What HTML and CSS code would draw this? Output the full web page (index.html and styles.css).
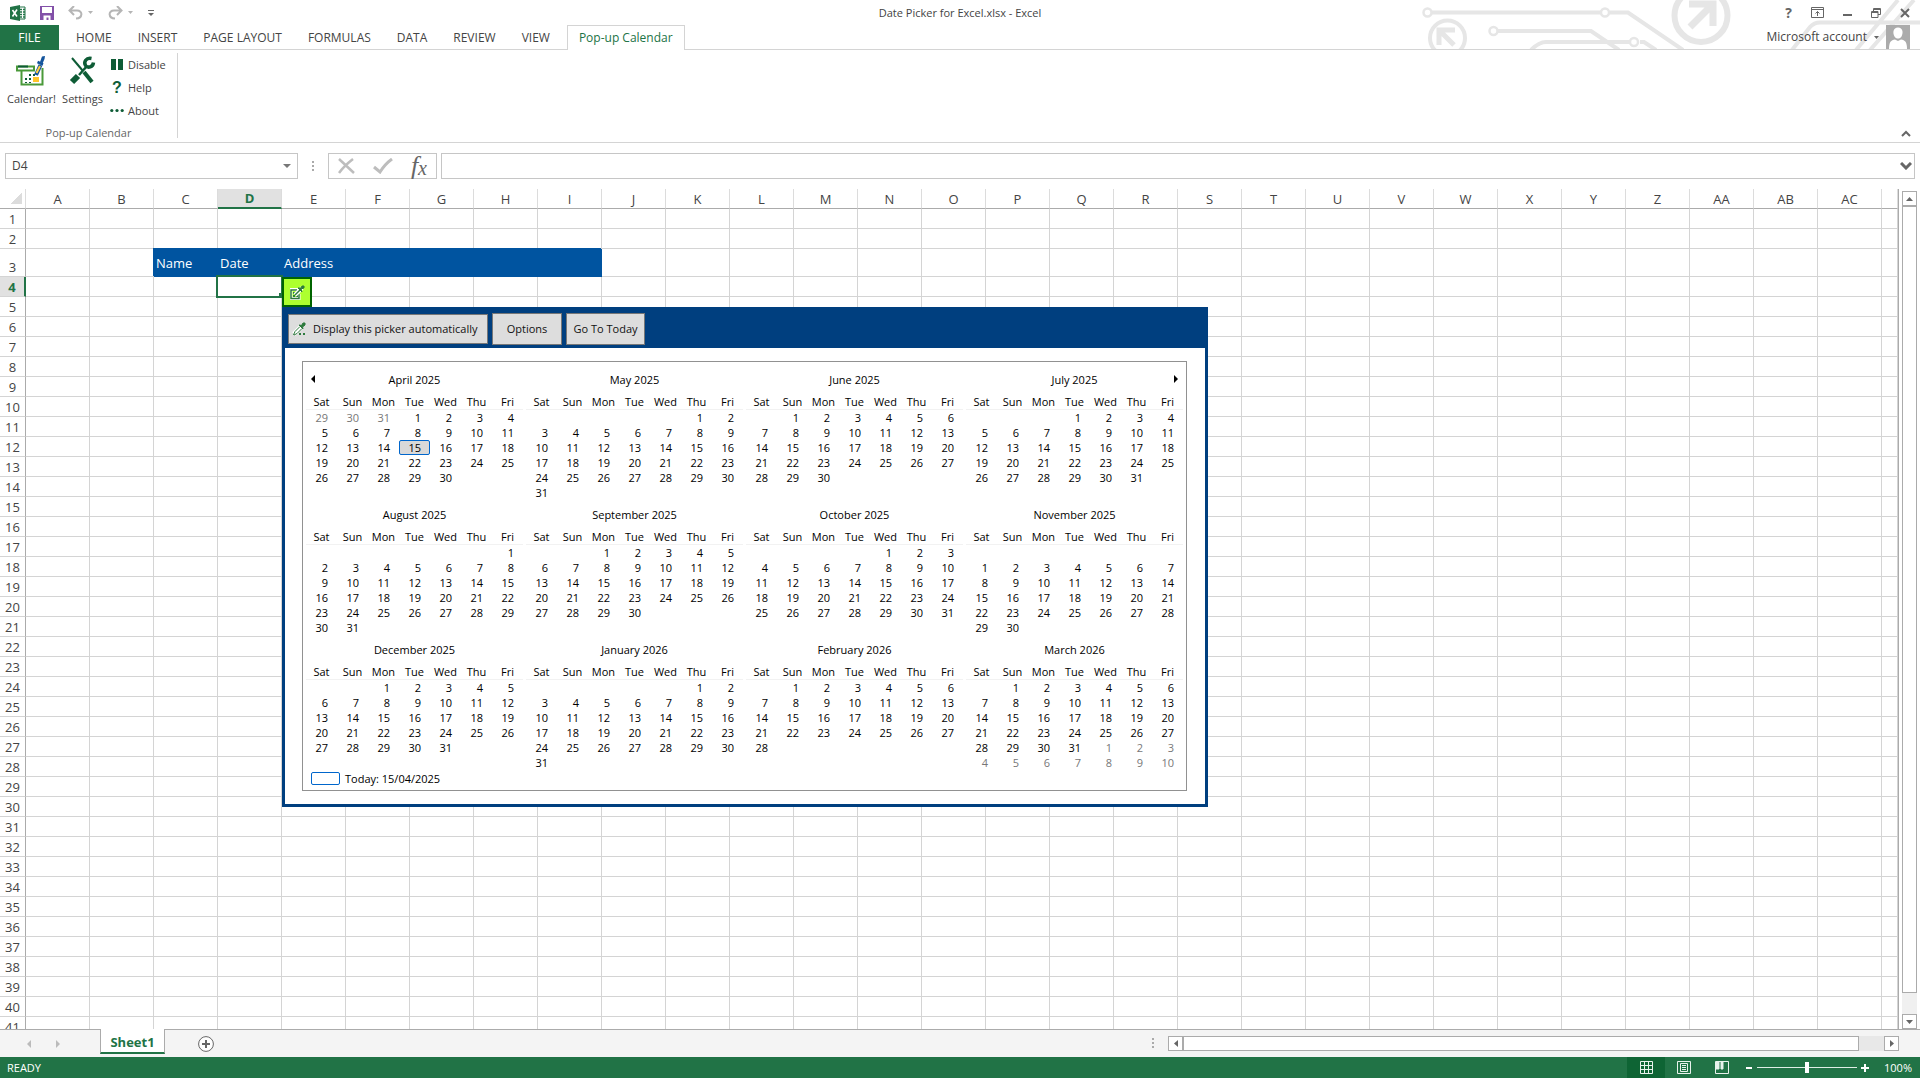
FILE: index.html
```html
<!DOCTYPE html>
<html lang="en">
<head>
<meta charset="utf-8">
<title>Date Picker for Excel.xlsx - Excel</title>
<link rel="stylesheet" href="styles.css">
</head>
<body>
<div class="app">
  <header class="top">
    <svg class="circuit" width="520" height="49" viewBox="0 0 520 49" fill="none" stroke="#e6e6e6" stroke-width="4" aria-hidden="true">
      <path d="M32 12.500H201M210 12.500H228L283 50M98 31H191L219 50M131 50Q139 42 146 42H229M240 42H244L256 50M392 50L410 27Q414 22.500 420 22.500H520M456 50L498 0M470 50L514 0"/>
      <g stroke-width="2.500"><circle cx="27.500" cy="12.500" r="4"/><circle cx="205" cy="12.500" r="4"/><circle cx="93.500" cy="31" r="4"/><circle cx="234" cy="42" r="4"/></g>
      <circle cx="47.500" cy="38" r="17.500"/>
      <path d="M39 45V30H55M40 31L54 45" stroke-width="5"/>
      <circle cx="301" cy="15.500" r="26.500" stroke-width="6"/>
      <path d="M289 4H313V26M312 5L290 27" stroke-width="7"/>
    </svg>
    <div class="titlebar">
      <div class="quick">
        <svg class="logo" width="16" height="16" viewBox="0 0 16 16" aria-hidden="true"><path d="M9 2H15V14H9" fill="#fff" stroke="#217346"/><path d="M10 4.500h2M13 4.500h2M10 7h2M13 7h2M10 9.500h2M13 9.500h2M10 12h2M13 12h2" stroke="#217346" stroke-width="1.500"/><path d="M0 2L10 0V16L0 14Z" fill="#217346"/><path d="M2.500 5L7 11.500M7 4.500L2.500 11.500" stroke="#fff" stroke-width="1.600"/></svg>
        <button class="plain" aria-label="Save"><svg width="14" height="14" viewBox="0 0 14 14"><path d="M0 0H14V14H0Z" fill="#8250a8"/><path d="M2 1H12V7H2ZM3.500 9.500H10.500V14H8.500V11.500H6.500V14H3.500Z" fill="#fff"/></svg></button>
        <button class="plain undo" aria-label="Undo"><svg width="26" height="14" viewBox="0 0 26 14" fill="none" stroke="#b5b5b5" stroke-width="2"><path d="M6 0L1.500 4.500L6 9M2 4.500H9C15 4.500 15 12 8 12.500"/><path d="M20 5H25L22.500 8Z" fill="#b5b5b5" stroke="none"/></svg></button>
        <button class="plain" aria-label="Redo"><svg width="26" height="14" viewBox="0 0 26 14" fill="none" stroke="#b5b5b5" stroke-width="2"><path d="M9 0L13.500 4.500L9 9M13 4.500H6C0 4.500 0 12 7 12.500"/><path d="M20 5H25L22.500 8Z" fill="#b5b5b5" stroke="none"/></svg></button>
        <button class="plain" aria-label="Customize Quick Access Toolbar"><svg width="6" height="8" viewBox="0 0 6 8"><path d="M0 1.500H6" stroke="#666"/><path d="M0 4H6L3 7Z" fill="#666"/></svg></button>
      </div>
      <h1 class="doc-title">Date Picker for Excel.xlsx - Excel</h1>
      <div class="window-buttons">
        <button class="plain help" aria-label="Help">?</button>
        <button class="plain" aria-label="Ribbon Display Options"><svg width="13" height="11" viewBox="0 0 13 11" fill="none" stroke="#666"><path d="M.5 .5H12.500V10.500H.5ZM.5 2.500H12.500M6.500 9V4.500M4.500 6.500L6.500 4.500L8.500 6.500"/></svg></button>
        <button class="plain" aria-label="Minimize"><svg width="9" height="11" viewBox="0 0 9 11"><path d="M0 8H9" stroke="#666" stroke-width="2"/></svg></button>
        <button class="plain" aria-label="Restore"><svg width="10" height="10" viewBox="0 0 10 10" fill="none" stroke="#666"><path d="M2.500 3V.5H9.500V6.500H7M.5 3.500H7V9.500H.5ZM.5 4.500H7M2.500 1.500H9.500"/></svg></button>
        <button class="plain" aria-label="Close"><svg width="10" height="10" viewBox="0 0 10 10"><path d="M1 1L9 9M9 1L1 9" stroke="#666" stroke-width="2"/></svg></button>
      </div>
    </div>
    <nav class="tabs">
      <a class="tab file" href="#">FILE</a>
      <a class="tab" href="#">HOME</a>
      <a class="tab" href="#">INSERT</a>
      <a class="tab" href="#">PAGE LAYOUT</a>
      <a class="tab" href="#">FORMULAS</a>
      <a class="tab" href="#">DATA</a>
      <a class="tab" href="#">REVIEW</a>
      <a class="tab" href="#">VIEW</a>
      <a class="tab active" href="#">Pop-up Calendar</a>
      <button class="plain account">Microsoft account
        <svg width="5" height="3" viewBox="0 0 5 3"><path d="M0 0H5L2.500 3Z" fill="#666"/></svg>
        <svg width="24" height="24" viewBox="0 0 24 24"><path d="M0 0H24V24H0Z" fill="#ababab"/><path d="M12 2.500C17 2.500 17.500 8 15.500 11.500C14.500 13 13.500 13.500 12 13.500S9.500 13 8.500 11.500C6.500 8 7 2.500 12 2.500ZM3 24C3 17 5 15 9 14.500L12 16L15 14.500C19 15 21 17 21 24Z" fill="#fff"/></svg>
      </button>
    </nav>
  </header>

  <section class="ribbon">
    <div class="group">
      <div class="group-body">
        <button class="plain big">
          <svg width="32" height="32" viewBox="0 0 32 32" fill="none"><path d="M5.500 16V29.500H26.500V13" stroke="#4a9a3a" stroke-width="2"/><path d="M1 11.500H18V15.500H1Z" fill="#fff" stroke="#4a9a3a" stroke-width="2"/><path d="M2 11.500H12" stroke="#0e5c36" stroke-width="2"/><path d="M13 19h2v2h-2zM9 23h2v2h-2zM13 23h2v2h-2zM9 27h2v1h-2zM13 27h2v1h-2zM17 19h2v2h-2z" fill="#0e5c36"/><path d="M17 22h6v5h-6z" fill="#ffc52a"/><path d="M20 20L24.500 10" stroke="#13549c" stroke-width="4"/><path d="M20.500 18L24 11" stroke="#ffd042" stroke-width="2"/><path d="M21.500 7L27 9.500" stroke="#13549c" stroke-width="2.500"/><path d="M24 7L26 1.500L29 1L28.500 4L26.500 8.500Z" fill="#13549c"/></svg>
          Calendar!</button>
        <button class="plain big">
          <svg width="32" height="32" viewBox="0 0 32 32" fill="none" stroke="#0e5c36"><path d="M5 3L16 16" stroke-width="2"/><path d="M17 17L25 27" stroke-width="4"/><path d="M5 27L11 21" stroke-width="6"/><path d="M12 20L20 11" stroke-width="2.500"/><path d="M24.500 3.500C19 2.500 16.500 7 18.500 10.500C21 13.500 26 12 26.500 7.500" stroke-width="3.500"/></svg>
          Settings</button>
        <div class="small-list">
          <button class="plain small"><svg width="14" height="14" viewBox="0 0 14 14"><path d="M1 1H6V12H1ZM8 1H13V12H8Z" fill="#0e5c36"/></svg>Disable</button>
          <button class="plain small"><span class="glyph">?</span>Help</button>
          <button class="plain small"><svg width="14" height="14" viewBox="0 0 14 14" fill="#0e5c36"><circle cx="1.800" cy="6.500" r="1.600"/><circle cx="7" cy="6.500" r="1.600"/><circle cx="12.200" cy="6.500" r="1.600"/></svg>About</button>
        </div>
      </div>
      <div class="group-label">Pop-up Calendar</div>
    </div>
    <button class="plain collapse" aria-label="Collapse the Ribbon"><svg width="10" height="7" viewBox="0 0 10 7"><path d="M1 6L5 2L9 6" fill="none" stroke="#666" stroke-width="2"/></svg></button>
  </section>

  <section class="formula">
    <div class="name-box">
      <input type="text" value="D4" aria-label="Name Box">
      <button class="plain" aria-label="Open name list"><svg width="8" height="5" viewBox="0 0 8 5"><path d="M0 0H8L4 4Z" fill="#777"/></svg></button>
    </div>
    <span class="dots"></span>
    <div class="fx-box">
      <button class="plain" aria-label="Cancel"><svg width="18" height="16" viewBox="0 0 18 16"><path d="M1 1L16 15M15 1Q6 8 1 15" stroke="#bdbdbd" stroke-width="2.500" fill="none"/></svg></button>
      <button class="plain" aria-label="Enter"><svg width="20" height="16" viewBox="0 0 20 16"><path d="M1 9L7 14Q12 6 19 1" stroke="#bdbdbd" stroke-width="3" fill="none"/></svg></button>
      <button class="plain fx" aria-label="Insert Function"><span class="f">f</span><span class="x">x</span></button>
    </div>
    <div class="formula-input">
      <input type="text" aria-label="Formula Bar">
      <button class="plain" aria-label="Expand Formula Bar"><svg width="12" height="8" viewBox="0 0 12 8"><path d="M1 1L6 6L11 1" fill="none" stroke="#666" stroke-width="3"/></svg></button>
    </div>
  </section>

  <main class="work">
    <div class="sheet">
      <table class="grid" id="grid"></table>
      <span class="selection"></span>
      <button class="picker-toggle" aria-label="Pick a date"><svg width="15" height="15" viewBox="0 0 15 15" fill="none"><path d="M8 4.500H1V13.500H9V9" stroke="#fff" stroke-width="3"/><path d="M7 5H1V13.500H9V9" stroke="#2c7a3c" stroke-width="1.500"/><path d="M3 7h2v2H3zM3 10h2v2H3zM6 10h2v2H6z" fill="#2c7a3c"/><path d="M5 10L12 3" stroke="#fff" stroke-width="4"/><path d="M5 10L10 5" stroke="#2c7a3c" stroke-width="1.500"/><path d="M8 3L12 7L11 4L14 3V1H12L11 3Z" fill="#2c7a3c" stroke="#2c7a3c"/></svg></button>
      <section class="picker" aria-label="Date picker">
        <div class="picker-bar">
          <button class="auto"><svg width="15" height="15" viewBox="0 0 15 15" fill="none"><path d="M2 12L9 5" stroke="#fff" stroke-width="5"/><path d="M1.500 13L3 9.500L8 4.500M2 13L5 11.500L10 6.500" stroke="#2c7a3c"/><path d="M7 3L11 7L10.500 5L13 3V1H11L9.500 3.500Z" fill="#2c7a3c" stroke="#2c7a3c"/><path d="M7 11h2v2H7zM11 11h2v2h-2z" fill="#2c7a3c"/></svg>Display this picker automatically</button>
          <button class="opt">Options</button>
          <button class="go">Go To Today</button>
        </div>
        <div class="calendar">
          <button class="plain prev" aria-label="Previous"><svg width="5" height="8" viewBox="0 0 5 8"><path d="M4 0V8L0 4Z" fill="#000"/></svg></button>
          <button class="plain next" aria-label="Next"><svg width="5" height="8" viewBox="0 0 5 8"><path d="M1 0V8L5 4Z" fill="#000"/></svg></button>
          <div class="months" id="months"></div>
          <button class="plain today-link"><span class="today-box"></span>Today: 15/04/2025</button>
        </div>
      </section>
    </div>
    <div class="vscroll">
      <button class="arrow" aria-label="Scroll up"><svg width="7" height="4" viewBox="0 0 7 4"><path d="M0 4H7L3.500 0Z" fill="#666"/></svg></button>
      <div class="vtrack"><div class="vthumb"></div></div>
      <button class="arrow" aria-label="Scroll down"><svg width="7" height="4" viewBox="0 0 7 4"><path d="M0 0H7L3.500 4Z" fill="#666"/></svg></button>
    </div>
  </main>

  <div class="sheet-bar">
    <div class="sheet-nav">
      <button class="plain" aria-label="Previous sheet"><svg width="5" height="8" viewBox="0 0 5 8"><path d="M4 0V8L0 4Z" fill="#bbb"/></svg></button>
      <button class="plain" aria-label="Next sheet"><svg width="5" height="8" viewBox="0 0 5 8"><path d="M1 0V8L5 4Z" fill="#bbb"/></svg></button>
    </div>
    <a class="sheet-tab" href="#">Sheet1</a>
    <button class="plain add" aria-label="New sheet"><svg width="16" height="16" viewBox="0 0 16 16" fill="none" stroke="#666"><circle cx="8" cy="8" r="7.400" fill="#fff"/><path d="M4 8H12M8 4V12" stroke-width="2"/></svg></button>
    <span class="dots"></span>
    <div class="hscroll">
      <button class="arrow" aria-label="Scroll left"><svg width="4" height="7" viewBox="0 0 4 7"><path d="M4 0V7L0 3.500Z" fill="#666"/></svg></button>
      <div class="hthumb"></div>
      <button class="arrow" aria-label="Scroll right"><svg width="4" height="7" viewBox="0 0 4 7"><path d="M0 0V7L4 3.500Z" fill="#666"/></svg></button>
    </div>
  </div>

  <footer class="status">
    <span class="ready">READY</span>
    <button class="plain view on" aria-label="Normal"><svg width="13" height="13" viewBox="0 0 13 13" fill="none" stroke="#e8f2ec"><path d="M.5 .5H12.500V12.500H.5ZM4.500 0V13M8.500 0V13M0 4.500H13M0 8.500H13"/></svg></button>
    <button class="plain view" aria-label="Page Layout"><svg width="14" height="13" viewBox="0 0 14 13" fill="none" stroke="#e8f2ec"><path d="M.5 .5H13.500V12.500H.5ZM3.500 2.500H10.500V10.500H3.500ZM5 4.500H9M5 6.500H9M5 8.500H9"/></svg></button>
    <button class="plain view" aria-label="Page Break Preview"><svg width="14" height="13" viewBox="0 0 14 13" fill="none" stroke="#e8f2ec"><path d="M.5 .5H13.500V12.500H.5Z"/><path d="M1 1H4V8H1ZM6 1H8V8H6Z" fill="#e8f2ec"/></svg></button>
    <button class="plain zoom-step" aria-label="Zoom out"><svg width="8" height="8" viewBox="0 0 8 8"><path d="M1 4H7" stroke="#fff" stroke-width="2"/></svg></button>
    <input class="zoom" type="range" min="0" max="200" value="100" aria-label="Zoom">
    <button class="plain zoom-step" aria-label="Zoom in"><svg width="8" height="8" viewBox="0 0 8 8"><path d="M0 4H8M4 0V8" stroke="#fff" stroke-width="2"/></svg></button>
    <span class="percent">100%</span>
  </footer>
</div>
<script src="script.js"></script>
</body>
</html>
```
FILE: styles.css
```css
* { box-sizing: border-box; }
body {
  margin: 0;
  background: #fff;
  color: #444;
  font: 12px/16px "Open Sans", "Noto Sans", sans-serif;
}
button, input { font: inherit; color: inherit; }
button { white-space: nowrap; }
a { color: inherit; text-decoration: none; }
svg { display: block; flex: none; }
.plain { border: 0; padding: 0; background: none; display: flex; align-items: center; justify-content: center; }
.app { display: flex; flex-direction: column; height: 100vh; padding-bottom: 2px; overflow: hidden; }

/* Title bar and ribbon tabs */
.top { position: relative; border-bottom: 1px solid #d4d4d4; height: 50px; flex: none; }
.circuit { position: absolute; right: 0; top: 0; }
.titlebar { position: relative; display: grid; grid-template-columns: 1fr auto 1fr; align-items: center; height: 25px; }
.quick { display: flex; align-items: center; gap: 14px; padding-left: 10px; height: 22px; }
.doc-title { margin: 0; font-size: 11px; font-weight: 400; }
.window-buttons { display: flex; align-items: center; justify-content: flex-end; gap: 19px; padding-right: 10px; height: 22px; color: #666; }
.help { font-weight: 700; font-size: 14px; }
.tabs { position: relative; display: flex; height: 25px; }
.tab { display: flex; align-items: center; justify-content: center; padding: 0 13px; white-space: nowrap; }
.file { width: 59px; background: #217346; color: #fff; margin-right: 4px; }
.active { margin-left: 4px; padding: 0 11px; border: 1px solid #d4d4d4; border-bottom: 0; background: #fff; color: #217346; }
.account { margin-left: auto; gap: 7px; padding-right: 10px; height: 24px; }

/* Ribbon */
.ribbon { display: flex; align-items: flex-end; justify-content: space-between; height: 93px; flex: none; border-bottom: 1px solid #d4d4d4; padding: 3px 9px 4px 0; font-size: 11px; }
.group { display: flex; flex-direction: column; justify-content: space-between; height: 85px; width: 178px; border-right: 1px solid #d4d4d4; }
.group-body { display: flex; height: 70px; padding-left: 6px; }
.big { flex-direction: column; justify-content: flex-start; width: 51px; gap: 4px; padding-top: 2px; }
.small-list { display: flex; flex-direction: column; padding-left: 2px; }
.small { height: 23px; gap: 4px; justify-content: flex-start; }
.glyph { width: 14px; font: 700 16px/16px "Liberation Sans", sans-serif; color: #0e5c36; text-align: center; }
.group-label { text-align: center; line-height: 10px; color: #666; }
.collapse { margin-bottom: 1px; }

/* Formula bar */
.formula { display: flex; height: 46px; flex: none; padding: 10px 5px; }
.name-box, .fx-box, .formula-input { display: flex; align-items: center; height: 26px; border: 1px solid #c6c6c6; }
.name-box { width: 293px; padding: 0 6px; }
.name-box input, .formula-input input { flex: 1; min-width: 0; border: 0; padding: 0; background: none; outline: 0; }
.dots { width: 2px; height: 11px; margin: auto 14px; background: repeating-linear-gradient(#aaa 0 2px, transparent 2px 4px); }
.fx-box { width: 109px; justify-content: space-between; padding: 0 9px; }
.fx { color: #666; font: italic 26px/24px "Liberation Serif", serif; }
.fx .x { font-size: 20px; padding-top: 3px; }
.formula-input { flex: 1; margin-left: 4px; padding: 0 2px; }

/* Worksheet */
.work { display: flex; flex: 1; min-height: 0; background: #fff; }
.sheet { position: relative; flex: 1; min-width: 0; overflow: hidden; border-right: 1px solid #ababab; }
.grid { table-layout: fixed; width: 100%; border-collapse: separate; border-spacing: 0; font-size: 13px; line-height: 18px; }
.grid th, .grid td { padding: 0; border: 0 solid #d4d4d4; border-width: 0 1px 1px 0; font-weight: 400; overflow: hidden; white-space: nowrap; }
.grid tr { height: 20px; }
.grid tr.tall { height: 28px; }
.grid tbody th { border-right-color: #ababab; vertical-align: bottom; padding-top: 2px; line-height: 17px; }
.grid thead th { border-bottom-color: #ababab; border-right-color: #dcdcdc; }
.grid thead th.corner { background: linear-gradient(135deg, transparent 50%, #dcdcdc 50%) 11px 4px / 11px 11px no-repeat; }
.grid thead th.picked { background: #e1e1e1; border-bottom: 2px solid #217346; color: #217346; font-weight: 700; line-height: 17px; }
.grid tbody th.picked { background: #e1e1e1; border-right: 2px solid #217346; color: #217346; font-weight: 700; }
.grid .banner { background: #0054a0; border-color: #0054a0; box-shadow: -1px -1px 0 #0054a0; color: #fff; padding-left: 2px; }
.col-head { width: 26px; }
.col { width: 64px; }
.selection { position: absolute; left: 216px; top: 86px; width: 67px; height: 23px; border: 2px solid #217346; }
.selection::after { content: ""; position: absolute; right: -2px; bottom: -2px; width: 4px; height: 5px; background: #217346; }

.picker-toggle { position: absolute; left: 282px; top: 88px; width: 30px; height: 30px; padding: 0; display: flex; align-items: center; justify-content: center; border: 2px solid #006400; background: #adff2f; }
.picker { position: absolute; left: 282px; top: 118px; width: 926px; border: 3px solid #003f7f; border-top: 0; background: #fff; color: #000; }
.picker-bar { display: flex; align-items: center; gap: 4px; height: 41px; padding: 3px 3px 0; background: #003f7f; }
.picker-bar button { height: 32px; padding: 0; border: 1px solid #777; background: #ddd; color: #111; font-size: 11px; }
.picker-bar .auto { width: 200px; height: 30px; display: flex; align-items: center; justify-content: flex-start; gap: 6px; padding-left: 3px; }
.picker-bar .opt { width: 70px; }
.picker-bar .go { width: 79px; }
.calendar { position: relative; margin: 13px 18px 13px 17px; padding: 3px; border: 1px solid #919191; font-size: 11px; line-height: 15px; }
.prev, .next { position: absolute; top: 13px; }
.prev { left: 8px; }
.next { right: 8px; }
.months { display: grid; grid-template-columns: repeat(4, 1fr); column-gap: 3px; }
.month { width: 100%; table-layout: fixed; border-collapse: separate; border-spacing: 0; }
.month caption { height: 29px; line-height: 29px; }
.month th { height: 16px; padding: 0; border-bottom: 1px solid #f2f2f2; font-weight: 400; text-align: center; }
.month td { height: 15px; padding: 0 9px 0 0; text-align: right; line-height: 15px; }
.month td.other { color: #777; }
.month td.today { background: #d9d9d9; border: 1px solid #0066cc; border-radius: 2px; line-height: 13px; padding-right: 8px; }
.today-link { gap: 5px; padding-left: 5px; height: 17px; }
.today-box { width: 29px; height: 13px; border: 1px solid #0066cc; border-radius: 2px; }

.arrow { flex: none; width: 15px; height: 15px; padding: 0; display: flex; align-items: center; justify-content: center; border: 1px solid #ababab; background: #fff; }
.vscroll { display: flex; flex-direction: column; width: 21px; padding: 2px 3px 0; background: #fff; }
.vtrack { display: flex; flex: 1; padding-bottom: 21px; background: #f0f0f0; }
.vthumb { flex: 1; border: 1px solid #ababab; background: #fff; }

/* Sheet tabs and horizontal scrollbar */
.sheet-bar { display: flex; align-items: center; height: 28px; flex: none; background: #f4f4f4; border-top: 1px solid #ababab; }
.sheet-nav { display: flex; gap: 23px; padding-left: 27px; width: 100px; }
.sheet-tab { align-self: flex-start; width: 65px; height: 25px; margin-top: -1px; border: 1px solid #ababab; border-width: 0 1px; border-bottom: 2px solid #217346; background: #fff; color: #217346; font-weight: 700; font-size: 13px; line-height: 27px; text-align: center; }
.add { margin-left: 33px; }
.sheet-bar .dots { margin: 0 14px 0 auto; }
.hscroll { display: flex; width: 39%; max-width: 731px; margin-right: 21px; background: #e8e8e8; }
.hthumb { flex: 1; margin-right: 25px; border: 1px solid #ababab; background: #fff; }

/* Status bar */
.status { display: flex; align-items: center; height: 21px; flex: none; padding: 0 8px 0 7px; background: #217346; color: #fff; font-size: 11px; }
.ready { margin-right: auto; }
.view { width: 38px; height: 21px; }
.on { background: #0e6434; }
.zoom-step { width: 10px; margin: 0 3px; }
.zoom { appearance: none; width: 100px; height: 13px; margin: 0; background: linear-gradient(#dfeee5, #dfeee5) center / 100% 1px no-repeat; }
.zoom::-webkit-slider-thumb { appearance: none; width: 4px; height: 11px; background: #fff; }
.percent { width: 39px; text-align: right; }
```
FILE: script.js
```js
const LAST_COLUMN = 29;
const LAST_ROW = 41;

function columnName(n) {
  return n > 26 ? "A" + String.fromCharCode(64 + n - 26) : String.fromCharCode(64 + n);
}

function buildGrid() {
  const banner = { 3: "Name", 4: "Date", 5: "Address" };
  let html = '<colgroup><col class="col-head">' + '<col class="col">'.repeat(LAST_COLUMN) + "<col></colgroup>";
  html += '<thead><tr><th class="corner"></th>';
  for (let c = 1; c <= LAST_COLUMN; c++) {
    html += `<th scope="col"${c === 4 ? ' class="picked"' : ""}>${columnName(c)}</th>`;
  }
  html += "<th></th></tr></thead><tbody>";
  for (let r = 1; r <= LAST_ROW; r++) {
    html += `<tr${r === 3 ? ' class="tall"' : ""}><th scope="row"${r === 4 ? ' class="picked"' : ""}>${r}</th>`;
    for (let c = 1; c <= LAST_COLUMN + 1; c++) {
      html += r === 3 && c >= 3 && c <= 9 ? `<td class="banner">${banner[c] || ""}</td>` : "<td></td>";
    }
    html += "</tr>";
  }
  document.getElementById("grid").innerHTML = html + "</tbody>";
}

function buildMonths() {
  const names = ["January", "February", "March", "April", "May", "June", "July", "August", "September", "October", "November", "December"];
  const days = ["Sat", "Sun", "Mon", "Tue", "Wed", "Thu", "Fri"];
  let html = "";
  for (let i = 0; i < 12; i++) {
    const first = new Date(2025, 3 + i, 1);
    const year = first.getFullYear();
    const month = first.getMonth();
    const offset = (first.getDay() + 1) % 7 || 7;
    html += `<table class="month"><caption>${names[month]} ${year}</caption><thead><tr>`;
    html += days.map((d) => `<th scope="col">${d}</th>`).join("") + "</tr></thead><tbody>";
    for (let week = 0; week < 6; week++) {
      html += "<tr>";
      for (let d = 0; d < 7; d++) {
        const date = new Date(year, month, week * 7 + d - offset + 1);
        const inside = date.getMonth() === month;
        const edge = (i === 0 && date < first) || (i === 11 && date > first);
        if (inside) {
          html += `<td${i === 0 && date.getDate() === 15 ? ' class="today"' : ""}>${date.getDate()}</td>`;
        } else {
          html += edge ? `<td class="other">${date.getDate()}</td>` : "<td></td>";
        }
      }
      html += "</tr>";
    }
    html += "</tbody></table>";
  }
  document.getElementById("months").innerHTML = html;
}

buildGrid();
buildMonths();
```
